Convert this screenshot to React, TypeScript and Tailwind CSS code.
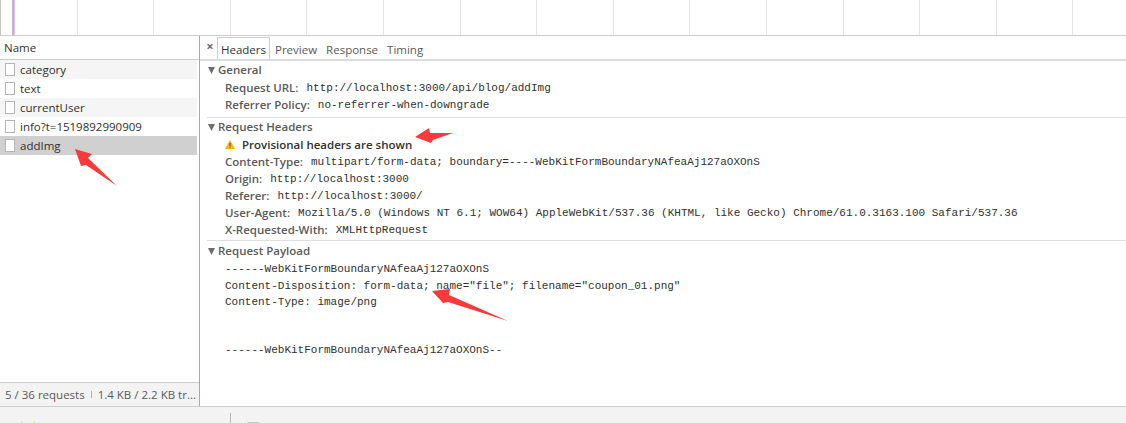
const names = ['category', 'text', 'currentUser', 'info?t=1519892990909', 'addImg']
const gridLines = Array.from({ length: 15 })

const sans = "font-['Open_Sans',sans-serif]"
const mono = "font-['Liberation_Mono',monospace] text-[11px] text-[#303030]"

function Triangle() {
  return (
    <svg width="7" height="7" viewBox="0 0 7 7" className="ml-px mr-[3px] mt-px shrink-0">
      <path d="M0 0h7L3.5 7z" fill="#6e6e6e" />
    </svg>
  )
}

function SectionTitle({ title }: { title: string }) {
  return (
    <div className="flex h-[17px] items-center pb-px text-[11.5px] font-semibold text-[#5a5a5a]">
      <Triangle />
      {title}
    </div>
  )
}

function HeaderRow({ label, value }: { label: string; value: string }) {
  return (
    <div className="flex h-[17px] items-center whitespace-pre pl-[18px]">
      <span className="text-[11.5px] font-semibold text-[#5a5a5a]">{label}:</span>
      <span className={`ml-[8px] pt-px ${mono}`}>{value}</span>
    </div>
  )
}

function PayloadRow({ text }: { text: string }) {
  return <div className={`flex h-[16.5px] items-center whitespace-pre pl-[18px] ${mono}`}>{text}</div>
}

export default function App() {
  return (
    <div className={`relative flex h-[423px] w-[1126px] flex-col overflow-hidden bg-white ${sans}`}>
      {/* timeline */}
      <div className="relative flex h-[36px] shrink-0 border-b border-[#cdcdcd]">
        <div className="absolute left-[12px] top-0 h-[35px] w-[2px] bg-[#b5b5f5]" />
        <div className="absolute left-[14px] top-0 h-[35px] w-px bg-[#ffb8b8]" />
        <div className="h-full w-[1px] shrink-0 bg-[#c4c4c4]" />
        {gridLines.map((_, i) => (
          <div key={i} className="h-full w-[76.6px] shrink-0 border-r border-[#e4e4e4]" />
        ))}
      </div>

      <div className="flex min-h-0 flex-1">
        {/* request list */}
        <div className="flex w-[200px] shrink-0 flex-col border-r border-[#a8a8a8]">
          <div className="flex h-[24px] shrink-0 items-center border-b border-[#cdcdcd] pl-[4px] text-[11.5px] text-[#333333]">
            Name
          </div>
          <div className="flex-1">
            {names.map((name, i) => (
              <div
                key={name}
                className={`flex h-[19px] items-center pl-[5px] pr-px text-[11.5px] text-[#303030] ${
                  i === 4 ? 'mr-[2px] bg-[#d0d0d0]' : i % 2 === 0 ? 'mr-[2px] bg-[#f5f5f5]' : ''
                }`}
              >
                <span className="mr-[5px] h-[13px] w-[10px] border border-[#b4b4b4] bg-white" />
                {name}
              </div>
            ))}
          </div>
          <div className="flex h-[24px] shrink-0 items-center whitespace-pre border-t border-[#cdcdcd] bg-[#f3f3f3] pl-[5px] text-[11.5px] text-[#5a5a5a]">
            5 / 36 requests
            <span className="mx-[6px] h-[7px] w-px bg-[#b0b0b0]" />
            1.4 KB / 2.2 KB tr...
          </div>
        </div>

        {/* details */}
        <div className="min-w-0 flex-1">
          <div className="flex h-[25px] items-end border-b-2 border-[#dcdcdc] pl-[3px] text-[11.5px] text-[#5a5a5a]">
            <span className="mb-[6px] w-[14px] text-center text-[13px] font-bold leading-none text-[#6e6e6e]">×</span>
            <span className="flex h-[22px] w-[53px] items-center justify-center border border-b-0 border-[#cdcdcd] pt-[3px] text-[#333333]">
              Headers
            </span>
            <span className="flex h-[22px] items-center pl-[5px] pt-[3px]">Preview</span>
            <span className="flex h-[22px] items-center pl-[9px] pt-[3px]">Response</span>
            <span className="flex h-[22px] items-center pl-[9px] pt-[3px]">Timing</span>
          </div>

          <div className="pl-[7px] pt-px">
            <div className="border-b border-[#e0e0e0] pb-[4px]">
              <SectionTitle title="General" />
              <HeaderRow label="Request URL" value="http://localhost:3000/api/blog/addImg" />
              <HeaderRow label="Referrer Policy" value="no-referrer-when-downgrade" />
            </div>
            <div className="border-b border-[#e0e0e0] pb-[2px] pt-px">
              <SectionTitle title="Request Headers" />
              <div className="flex h-[17px] items-center pl-[18px] text-[11.5px] font-semibold text-[#303030]">
                <svg width="10" height="9" viewBox="0 0 10 9" className="mr-[7px]">
                  <path d="M5 0l5 9H0z" fill="#f4b400" />
                  <path d="M4.5 3h1v3h-1zM4.5 6.8h1v1h-1z" fill="#5a4a00" />
                </svg>
                Provisional headers are shown
              </div>
              <HeaderRow label="Content-Type" value="multipart/form-data; boundary=----WebKitFormBoundaryNAfeaAj127aOXOnS" />
              <HeaderRow label="Origin" value="http://localhost:3000" />
              <HeaderRow label="Referer" value="http://localhost:3000/" />
              <HeaderRow
                label="User-Agent"
                value="Mozilla/5.0 (Windows NT 6.1; WOW64) AppleWebKit/537.36 (KHTML, like Gecko) Chrome/61.0.3163.100 Safari/537.36"
              />
              <HeaderRow label="X-Requested-With" value="XMLHttpRequest" />
            </div>
            <div className="pt-[2px]">
              <div className="mb-px">
                <SectionTitle title="Request Payload" />
              </div>
              <PayloadRow text="------WebKitFormBoundaryNAfeaAj127aOXOnS" />
              <PayloadRow text={'Content-Disposition: form-data; name="file"; filename="coupon_01.png"'} />
              <PayloadRow text="Content-Type: image/png" />
              <div className="h-[31.5px]" />
              <PayloadRow text="------WebKitFormBoundaryNAfeaAj127aOXOnS--" />
            </div>
          </div>
        </div>
      </div>

      {/* drawer toolbar */}
      <div className="relative h-[17px] shrink-0 border-t border-[#cdcdcd] bg-[#f3f3f3]">
        <div className="absolute left-[230px] top-[6px] h-[10px] w-px bg-[#b5b5b5]" />
        <div className="absolute left-[247px] top-[15px] h-[1px] w-[12px] bg-[#c8c8c8]" />
        <div className="absolute left-[21px] top-[15px] h-[1px] w-px bg-[#8fc24a]" />
        <div className="absolute left-[34px] top-[15px] h-[1px] w-px bg-[#8fc24a]" />
      </div>

      {/* annotation arrows */}
      <svg width="1126" height="423" viewBox="0 0 1126 423" className="pointer-events-none absolute left-0 top-0">
        <path d="M75 149L92 154L88 158L117 186L86 165L81 166Z" fill="#f93a3a" />
        <path d="M415 137L429 128L430 133L453 133L433 140L431 143Z" fill="#f93a3a" />
        <path d="M432 291L450 289L449 295L508 321L448 302L443 303Z" fill="#f93a3a" />
      </svg>
    </div>
  )
}
